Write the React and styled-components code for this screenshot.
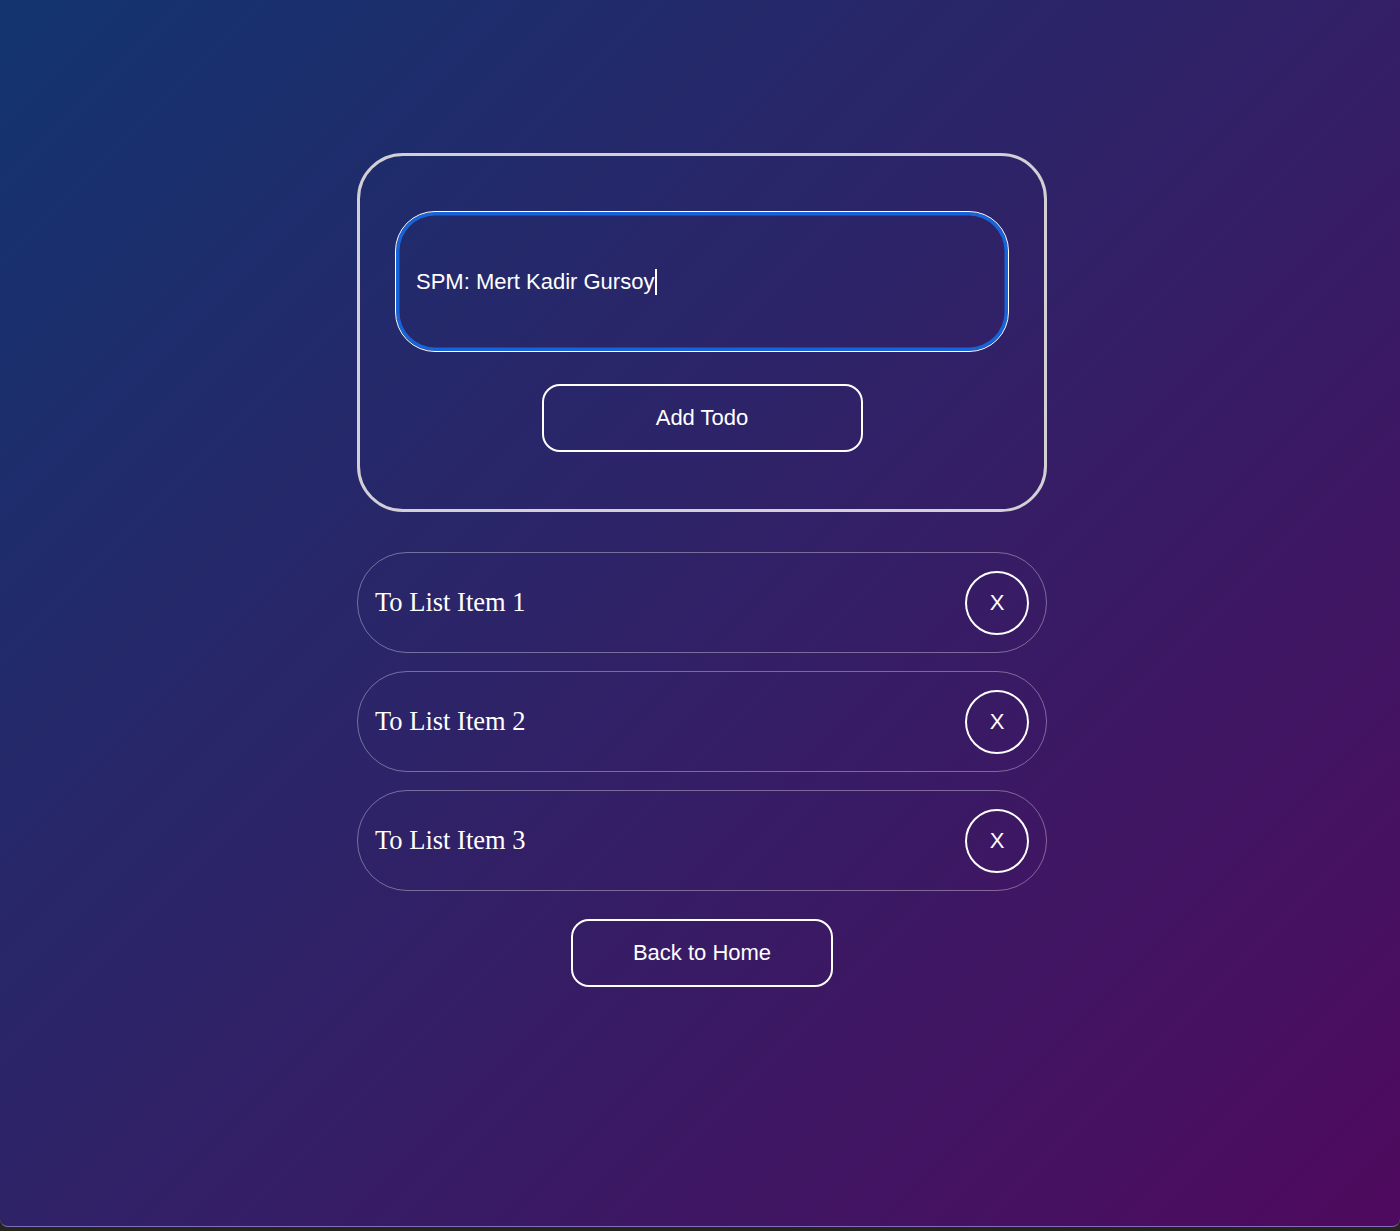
import React from 'react';
import styled, { createGlobalStyle } from 'styled-components';

const GlobalStyle = createGlobalStyle`
  html, body {
    margin: 0;
    padding: 0;
    background: #26241f;
  }
  * {
    box-sizing: border-box;
  }
`;

// Full window with the diagonal blue → purple gradient
const Page = styled.div`
  height: 1227px;
  background: linear-gradient(135deg, #12346f 0%, #2e2368 45%, #4f0a5e 100%);
  border-bottom: 1px solid rgba(170, 140, 220, 0.7);
  border-radius: 0 0 8px 8px;
  display: flex;
  justify-content: center;
  padding: 153px 0 0 4px;
`;

const Column = styled.div`
  width: 690px;
  display: flex;
  flex-direction: column;
  align-items: center;
`;

const FormCard = styled.div`
  width: 100%;
  height: 359px;
  border: 3px solid #d2d0d4;
  border-radius: 46px;
  padding: 55px 35px 0;
  display: flex;
  flex-direction: column;
  align-items: center;
  gap: 32px;
`;

const InputBox = styled.div`
  width: 100%;
  height: 141px;
  border: 1.5px solid #ffffff;
  border-radius: 40px;
  box-shadow: inset 0 0 0 3.5px #1764d8;
  display: flex;
  align-items: center;
  padding: 0 20px;
  font-family: "Liberation Sans", Arial, sans-serif;
  font-size: 22px;
  color: #ffffff;
`;

const Caret = styled.span`
  display: inline-block;
  width: 1.5px;
  height: 26px;
  margin-left: 1px;
  background: #ffffff;
  vertical-align: middle;
`;

const OutlineButton = styled.button`
  width: ${({ $width }) => $width}px;
  height: 68px;
  background: transparent;
  border: 2px solid #ffffff;
  border-radius: 18px;
  color: #ffffff;
  font-family: "Liberation Sans", Arial, sans-serif;
  font-size: 22px;
  cursor: pointer;
  flex-shrink: 0;
`;

const TodoList = styled.ul`
  list-style: none;
  margin: 40px 0 28px;
  padding: 0;
  width: 100%;
  display: flex;
  flex-direction: column;
  gap: 18px;
`;

const TodoRow = styled.li`
  height: 101px;
  border: 1.5px solid rgba(255, 255, 255, 0.35);
  border-radius: 50px;
  display: flex;
  align-items: center;
  justify-content: space-between;
  padding: 0 17px 0 17px;
`;

const TodoText = styled.span`
  font-family: "Liberation Serif", "Times New Roman", serif;
  font-size: 26.5px;
  color: #ffffff;
`;

const RemoveButton = styled.button`
  width: 64px;
  height: 64px;
  border-radius: 50%;
  border: 2px solid #ffffff;
  background: transparent;
  color: #ffffff;
  font-family: "Liberation Sans", Arial, sans-serif;
  font-size: 22px;
  padding: 0;
  cursor: pointer;
`;

const todos = ['To List Item 1', 'To List Item 2', 'To List Item 3'];

export default function App() {
  return (
    <>
      <GlobalStyle />
      <Page>
        <Column>
          <FormCard>
            <InputBox>
              SPM: Mert Kadir Gursoy<Caret />
            </InputBox>
            <OutlineButton $width={321}>Add Todo</OutlineButton>
          </FormCard>

          <TodoList>
            {todos.map((todo) => (
              <TodoRow key={todo}>
                <TodoText>{todo}</TodoText>
                <RemoveButton>X</RemoveButton>
              </TodoRow>
            ))}
          </TodoList>

          <OutlineButton $width={262}>Back to Home</OutlineButton>
        </Column>
      </Page>
    </>
  );
}
